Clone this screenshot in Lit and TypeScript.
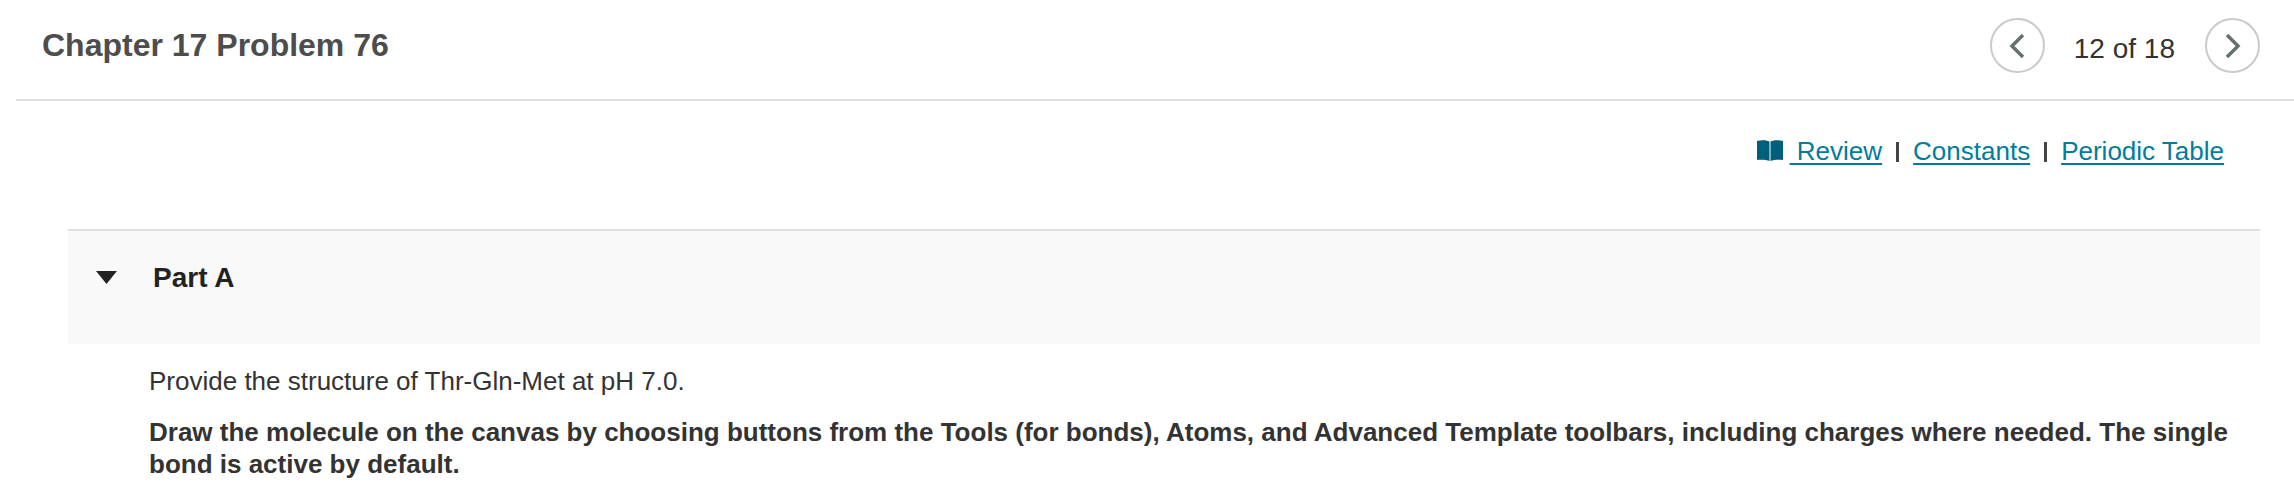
import { LitElement, html, css } from "lit";
import { customElement } from "lit/decorators.js";

@customElement("app-root")
export class AppRoot extends LitElement {
  static styles = css`
    :host {
      display: block;
      width: 2294px;
      height: 494px;
      overflow: hidden;
      background: #fff;
      font-family: "Liberation Sans", Arial, sans-serif;
      color: #333;
    }
    .top {
      margin-left: 16px;
      height: 99px;
      box-sizing: content-box;
      border-bottom: 2px solid #e0e0e0;
      display: flex;
      align-items: flex-start;
      justify-content: space-between;
      padding: 0 34px 0 26px;
    }
    h1 {
      margin: 26px 0 0;
      font-size: 32px;
      line-height: 38px;
      font-weight: 700;
      color: #4d4d4d;
    }
    .pager {
      display: flex;
      align-items: flex-start;
      margin-top: 18px;
    }
    .circle {
      width: 55px;
      height: 55px;
      box-sizing: border-box;
      border: 2px solid #cacaca;
      border-radius: 50%;
      display: flex;
      align-items: center;
      justify-content: center;
    }
    .count {
      margin: 15px 30px 0 29px;
      font-size: 28px;
      line-height: 32px;
      color: #333;
    }
    .links {
      display: flex;
      justify-content: flex-end;
      align-items: center;
      height: 32px;
      margin-top: 34px;
      padding-right: 70px;
      font-size: 26px;
    }
    .links a {
      color: #007c9e;
      text-decoration: underline;
      text-decoration-thickness: 2px;
      text-underline-offset: 3px;
      white-space: pre;
    }
    .sep {
      width: 3px;
      height: 20px;
      background: #444;
      margin: 1px 14px 0 14px;
    }
    .book {
      margin-right: 7px;
      display: block;
    }
    .part {
      margin: 62px 34px 0 68px;
      border-top: 2px solid #e0e0e0;
    }
    .part-head {
      height: 113px;
      background: #f9f9f9;
      display: flex;
      align-items: flex-start;
    }
    .tri {
      margin: 40px 36px 0 28px;
      display: block;
    }
    h2 {
      margin: 31px 0 0;
      font-size: 28px;
      line-height: 32px;
      font-weight: 700;
      color: #222;
    }
    .body {
      padding: 21px 30px 0 81px;
      font-size: 26px;
      line-height: 32px;
    }
    p {
      margin: 0 0 19px;
    }
    .strong {
      font-weight: 700;
      color: #333;
    }
  `;

  render() {
    return html`
      <div class="top">
        <h1>Chapter 17 Problem 76</h1>
        <div class="pager">
          <div class="circle">
            <svg width="16" height="26" viewBox="0 0 16 26" fill="none" stroke="#66716f" stroke-width="3.5">
              <path d="M14 2 L3 13 L14 24" />
            </svg>
          </div>
          <div class="count">12 of 18</div>
          <div class="circle">
            <svg width="16" height="26" viewBox="0 0 16 26" fill="none" stroke="#66716f" stroke-width="3.5">
              <path d="M2 2 L13 13 L2 24" />
            </svg>
          </div>
        </div>
      </div>
      <div class="links">
        <svg class="book" width="26" height="22" viewBox="0 0 26 22" fill="#005f7a">
          <path d="M0 1 C4 0 9 0 12.5 1.5 V21 C9 19.5 4 19.5 0 20 Z" />
          <path d="M26 1 C22 0 17 0 13.5 1.5 V21 C17 19.5 22 19.5 26 20 Z" />
        </svg>
        <a href="#"> Review</a>
        <span class="sep"></span>
        <a href="#">Constants</a>
        <span class="sep"></span>
        <a href="#">Periodic Table</a>
      </div>
      <section class="part">
        <div class="part-head">
          <svg class="tri" width="21" height="13" viewBox="0 0 21 13" fill="#222">
            <path d="M0 0 H21 L10.5 13 Z" />
          </svg>
          <h2>Part A</h2>
        </div>
        <div class="body">
          <p>Provide the structure of Thr-Gln-Met at pH 7.0.</p>
          <p class="strong">Draw the molecule on the canvas by choosing buttons from the Tools (for bonds), Atoms, and Advanced Template toolbars, including charges where needed. The single bond is active by default.</p>
        </div>
      </section>
    `;
  }
}
